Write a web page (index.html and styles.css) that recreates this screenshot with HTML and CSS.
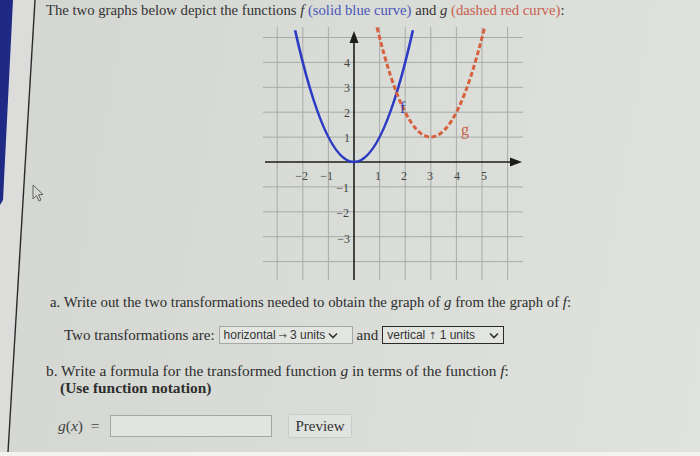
FILE: index.html
```html
<!DOCTYPE html>
<html>
<head>
<meta charset="utf-8">
<link rel="stylesheet" href="styles.css">
</head>
<body>
<div class="page">
  <p class="title">The two graphs below depict the functions <i>f</i> <span class="blue">(solid blue curve)</span> and <i>g</i> <span class="red">(dashed red curve)</span>:</p>
  <div class="graph-wrap">
    <svg class="graph" width="270" height="262" viewBox="0 0 270 262">
      <g class="grid">
        <line x1="17.2" y1="5" x2="17.2" y2="258"/>
        <line x1="42.8" y1="5" x2="42.8" y2="258"/>
        <line x1="68.4" y1="5" x2="68.4" y2="258"/>
        <line x1="119.6" y1="5" x2="119.6" y2="258"/>
        <line x1="145.2" y1="5" x2="145.2" y2="258"/>
        <line x1="170.8" y1="5" x2="170.8" y2="258"/>
        <line x1="196.4" y1="5" x2="196.4" y2="258"/>
        <line x1="222" y1="5" x2="222" y2="258"/>
        <line x1="247.6" y1="5" x2="247.6" y2="258"/>
        <line x1="3" y1="15.5" x2="263" y2="15.5"/>
        <line x1="3" y1="40.4" x2="263" y2="40.4"/>
        <line x1="3" y1="65.3" x2="263" y2="65.3"/>
        <line x1="3" y1="90.2" x2="263" y2="90.2"/>
        <line x1="3" y1="115.1" x2="263" y2="115.1"/>
        <line x1="3" y1="164.9" x2="263" y2="164.9"/>
        <line x1="3" y1="189.8" x2="263" y2="189.8"/>
        <line x1="3" y1="214.7" x2="263" y2="214.7"/>
        <line x1="3" y1="239.6" x2="263" y2="239.6"/>
      </g>
      <g class="axes">
        <line x1="5" y1="140" x2="256" y2="140"/>
        <line x1="94" y1="258" x2="94" y2="16"/>
      </g>
      <polygon class="arrow" points="262,140 250,135.5 250,144.5"/>
      <polygon class="arrow" points="94,9 89.5,21 98.5,21"/>
      <g class="ticks">
        <text x="90" y="45">4</text>
        <text x="90" y="70">3</text>
        <text x="90" y="95">2</text>
        <text x="90" y="120">1</text>
        <text x="48" y="158">−2</text>
        <text x="73" y="158">−1</text>
        <text x="121" y="158">1</text>
        <text x="147" y="158">2</text>
        <text x="173" y="158">3</text>
        <text x="200" y="158">4</text>
        <text x="227" y="158">5</text>
        <text x="89" y="170">−1</text>
        <text x="89" y="195">−2</text>
        <text x="90" y="221">−3</text>
      </g>
      <path class="f" d="M35.1 8.3 Q94 271.7 152.9 8.3"/>
      <path class="gc" d="M117 5.3 Q170.8 224.9 224.6 5.3"/>
      <text class="lab-f" x="140" y="91">f</text>
      <text class="lab-g" x="201" y="113">g</text>
    </svg>
  </div>
  <p class="qa">a. Write out the two transformations needed to obtain the graph of <i>g</i> from the graph of <i>f</i>:</p>
  <div class="row">
    <span>Two transformations are:</span>
    <span class="sel sel1">horizontal <span class="arr">→</span> 3 units <svg class="chev" width="10" height="7" viewBox="0 0 10 7"><path d="M1 1.5 L5 5.5 L9 1.5"/></svg></span>
    <span>and</span>
    <span class="sel sel2">vertical <span class="arr">↑</span> 1 units <svg class="chev" width="10" height="7" viewBox="0 0 10 7"><path d="M1 1.5 L5 5.5 L9 1.5"/></svg></span>
  </div>
  <p class="qb">b. Write a formula for the transformed function <i>g</i> in terms of the function <i>f</i>:<br><b class="note">(Use function notation)</b></p>
  <div class="answer">
    <span class="gx"><i>g</i>(<i>x</i>) <span class="eq">=</span></span>
    <span class="inp"></span>
    <span class="btn">Preview</span>
  </div>
</div>
<svg class="photo" width="700" height="456" viewBox="0 0 700 456">
  <polygon points="35,0 0,0 0,456 8,456" fill="#dcdddb"/>
  <polygon points="0,0 13,0 3,200 0,205" fill="#1f2a86"/>
  <line x1="35" y1="0" x2="8" y2="452" stroke="#2a2a2a" stroke-width="1.4"/>
  <rect x="0" y="452" width="700" height="4" fill="#f2f3f1"/>
  <path d="M33 185 L33 199 L36.5 195.5 L39 201 L41 200 L38.6 194.7 L43 194.5 Z" fill="none" stroke="#555" stroke-width="0.9"/>
</svg>
</body>
</html>
```
FILE: styles.css
```css
html, body {
  margin: 0;
  padding: 0;
}
body {
  width: 700px;
  height: 456px;
  overflow: hidden;
  position: relative;
  background: linear-gradient(100deg, #d3d6d1 0%, #d9dcd7 50%, #dfe2dd 100%);
  font-family: "Liberation Serif", "Times New Roman", serif;
  color: #2e2e2e;
}
.page {
  padding-left: 46px;
}
p { margin: 0; }
.title {
  font-size: 14.7px;
  line-height: 18px;
  padding-top: 1px;
  color: #333;
}
.blue { color: #4a56b8; }
.red { color: #c8604e; }
.graph-wrap {
  margin-left: 214px;
  height: 262px;
  margin-top: 3px;
}
.graph { display: block; }
.grid line { stroke: #a9aca8; stroke-width: 1; }
.axes line { stroke: #1c1c1c; stroke-width: 1.6; }
.arrow { fill: #1c1c1c; }
.ticks text {
  font-family: "Liberation Serif", serif;
  font-size: 12px;
  fill: #444;
  text-anchor: end;
}
.f { fill: none; stroke: #2b3bc4; stroke-width: 2.6; }
.gc { fill: none; stroke: #d7623f; stroke-width: 3; stroke-dasharray: 5 2.5; }
.lab-f {
  font-family: "Liberation Serif", serif;
  font-size: 16px;
  fill: #3a3fb0;
}
.lab-g {
  font-family: "Liberation Serif", serif;
  font-size: 16px;
  fill: #c9644d;
}
.qa {
  font-size: 14.8px;
  line-height: 20px;
  margin-top: 8px;
  padding-left: 4px;
}
.row {
  display: flex;
  align-items: center;
  gap: 4px;
  margin-top: 13px;
  padding-left: 18px;
  font-size: 15px;
  height: 20px;
  white-space: nowrap;
}
.sel {
  display: inline-flex;
  align-items: center;
  gap: 3px;
  font-family: "Liberation Sans", Arial, sans-serif;
  font-size: 12px;
  height: 18px;
  padding: 0 4px;
  box-sizing: border-box;
  background: #e3e5e1;
  color: #333;
  white-space: nowrap;
  flex: none;
}
.sel1 {
  border: 1px solid #a5a8a4;
  width: 134px;
}
.sel2 {
  border: 1.6px solid #2a2a2a;
  width: 122px;
}
.sel2 .chev { margin-left: auto; }
.arr { font-family: "DejaVu Sans", sans-serif; font-size: 10px; color: #555; }
.chev path { fill: none; stroke: #333; stroke-width: 1.6; }
.qb {
  font-size: 15.4px;
  line-height: 17px;
  margin-top: 17px;
}
.note {
  display: inline-block;
  padding-left: 14px;
}
.answer {
  display: flex;
  align-items: center;
  margin-top: 18px;
  padding-left: 12px;
  font-size: 15.5px;
  height: 24px;
}
.gx { width: 52px; color: #444; white-space: nowrap; }
.eq { margin-left: 4px; }
.inp {
  width: 162px;
  height: 22px;
  box-sizing: border-box;
  border: 1px solid #a3a6a2;
  background: #e2e4e0;
}
.btn {
  margin-left: 16px;
  width: 64px;
  height: 24px;
  box-sizing: border-box;
  border: 1px solid #c9ccc8;
  border-radius: 2px;
  background: #e0e3df;
  display: flex;
  align-items: center;
  justify-content: center;
  font-size: 15px;
  color: #333;
}
.photo {
  position: absolute;
  left: 0;
  top: 0;
  pointer-events: none;
}
```
